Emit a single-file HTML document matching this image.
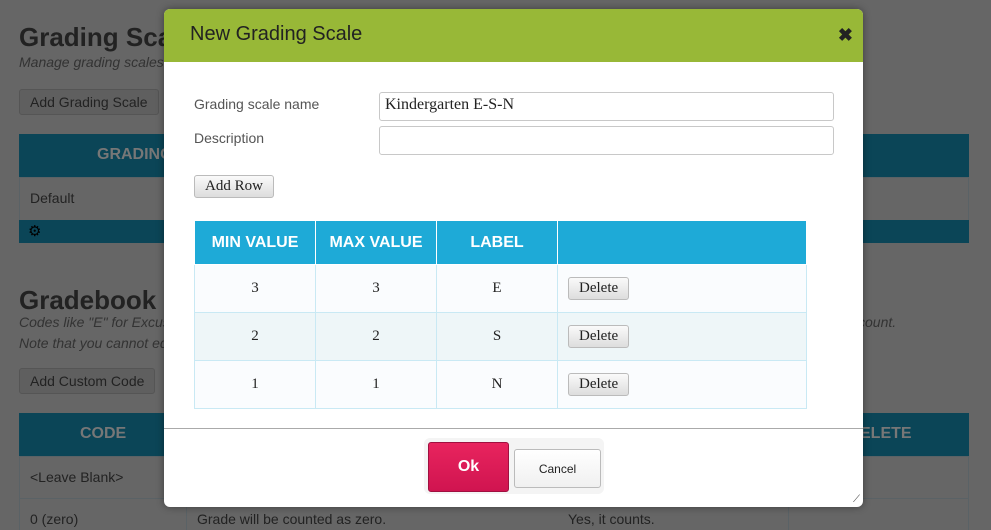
<!DOCTYPE html>
<html><head><style>
*{box-sizing:border-box;margin:0;padding:0}
html,body{width:991px;height:530px;overflow:hidden;background:#666}
body{font-family:"Liberation Sans",sans-serif;color:#222;position:relative}
.abs{position:absolute}
.bt{position:absolute;border:1px solid #555;border-radius:3px;background:#5f5f5f;color:#222;font-size:14px;padding:4px 10px}
.m{position:absolute;left:164px;top:9px;width:699px;height:498px;background:#fff;border-radius:6px;overflow:hidden;box-shadow:0 0 8px rgba(0,0,0,.4)}
.hd{height:53px;background:#98b837;position:relative}
.hd h1{position:absolute;left:26px;top:14px;font-size:20px;font-weight:normal;color:#222}
.lbl{position:absolute;font-size:14px;color:#555}
.inp{position:absolute;border:1px solid #c8c8c8;border-radius:3px;background:#fff;font-family:"Liberation Serif",serif;font-size:16px;padding:3px 5px}
table{position:absolute;left:30px;top:211px;border-collapse:collapse}
td,th{border:1px solid #c9e9f4;text-align:center;font-family:"Liberation Serif",serif;font-size:15px;width:121px;height:48px}
th{background:#1eaad7;color:#fff;font-family:"Liberation Sans",sans-serif;font-weight:bold;font-size:16px;height:44px;border-color:#fff}
td.w,th.w{width:249px;text-align:left;padding-left:10px}
tr.a td{background:#fafcfe}tr.b td{background:#eef6f8}
.del{display:inline-block;border:1px solid #bbb;border-radius:3px;background:linear-gradient(#fafafa,#ddd);font-size:15px;padding:2px 10px;font-family:"Liberation Serif",serif}
</style></head><body>
<svg class="abs" style="left:0;top:0" width="991" height="530">
<rect x="0" y="0" width="991" height="530" fill="#666"/>
<rect x="19" y="134" width="950" height="43" fill="#0b4557"/>
<rect x="19.5" y="177.5" width="949" height="43" fill="none" stroke="#5a6266"/>
<rect x="19" y="220" width="950" height="23" fill="#0b4557"/>
<rect x="19" y="413" width="950" height="43" fill="#0b4557"/>
<rect x="19.5" y="456.5" width="949" height="42" fill="none" stroke="#5a6266"/>
<rect x="19.5" y="498.5" width="949" height="40" fill="none" stroke="#5a6266"/>
<line x1="186.5" y1="498" x2="186.5" y2="530" stroke="#5a6266"/>
<line x1="788.5" y1="456" x2="788.5" y2="530" stroke="#5a6266"/>
</svg>
<div class="abs" style="left:19px;top:22px;font-size:26px;font-weight:bold;color:#222">Grading Scales</div>
<div class="abs" style="left:19px;top:54px;font-size:14px;font-style:italic;color:#333">Manage grading scales</div>
<div class="bt" style="left:19px;top:89px">Add Grading Scale</div>
<div class="abs" style="left:97px;top:146px;font-size:16px;font-weight:bold;color:#777">GRADING</div>
<div class="abs" style="left:30px;top:190px;font-size:14px">Default</div>
<div class="abs" style="left:28px;top:222px;font-size:15px;color:#000">⚙</div>
<div class="abs" style="left:19px;top:285px;font-size:26px;font-weight:bold;color:#222">Gradebook Codes</div>
<div class="abs" style="left:19px;top:314px;font-size:14px;font-style:italic;color:#333">Codes like "E" for Excused</div>
<div class="abs" style="left:19px;top:335px;font-size:14px;font-style:italic;color:#333">Note that you cannot edit</div>
<div class="abs" style="left:858px;top:314px;font-size:14px;font-style:italic;color:#333">count.</div>
<div class="bt" style="left:19px;top:368px">Add Custom Code</div>
<div class="abs" style="left:80px;top:425px;font-size:16px;font-weight:bold;color:#777">CODE</div>
<div class="abs" style="left:860px;top:425px;font-size:16px;font-weight:bold;color:#777">ELETE</div>
<div class="abs" style="left:30px;top:469px;font-size:14px">&lt;Leave Blank&gt;</div>
<div class="abs" style="left:30px;top:511px;font-size:14px">0 (zero)</div>
<div class="abs" style="left:197px;top:511px;font-size:14px">Grade will be counted as zero.</div>
<div class="abs" style="left:568px;top:511px;font-size:14px">Yes, it counts.</div>
<div class="m">
<div class="hd"><h1>New Grading Scale</h1><div class="abs" style="right:10px;top:16px;font-size:18px;font-weight:bold">✖</div></div>
<div class="lbl" style="left:30px;top:87px">Grading scale name</div>
<div class="lbl" style="left:30px;top:121px">Description</div>
<div class="inp" style="left:215px;top:83px;width:455px;height:29px">Kindergarten E-S-N</div>
<div class="inp" style="left:215px;top:117px;width:455px;height:29px"></div>
<div class="abs" style="left:30px;top:166px;border:1px solid #bbb;border-radius:3px;background:linear-gradient(#fafafa,#ddd);font-family:'Liberation Serif',serif;font-size:15px;padding:2px 10px">Add Row</div>
<table>
<tr><th>MIN VALUE</th><th>MAX VALUE</th><th>LABEL</th><th class="w"></th></tr>
<tr class="a"><td>3</td><td>3</td><td>E</td><td class="w"><span class="del">Delete</span></td></tr>
<tr class="b"><td>2</td><td>2</td><td>S</td><td class="w"><span class="del">Delete</span></td></tr>
<tr class="a"><td>1</td><td>1</td><td>N</td><td class="w"><span class="del">Delete</span></td></tr>
</table>
<div class="abs" style="left:0;top:419px;width:699px;height:1px;background:#aaa"></div>
<div class="abs" style="left:260px;top:429px;width:180px;height:56px;background:#f4f4f4;border-radius:6px"></div>
<div class="abs" style="left:264px;top:433px;width:81px;height:50px;background:linear-gradient(#e8245e,#d01450);border:1px solid #a01040;border-radius:3px;color:#fff;font-size:16px;font-weight:bold;text-align:center;line-height:48px">Ok</div>
<div class="abs" style="left:350px;top:440px;width:87px;height:39px;background:linear-gradient(#fff,#f0f0f0);border:1px solid #bbb;border-radius:3px;font-size:12px;text-align:center;line-height:38px">Cancel</div>
<div class="abs" style="right:3px;bottom:2px;font-size:10px;color:#444">⟋</div>
</div>
</body></html>
